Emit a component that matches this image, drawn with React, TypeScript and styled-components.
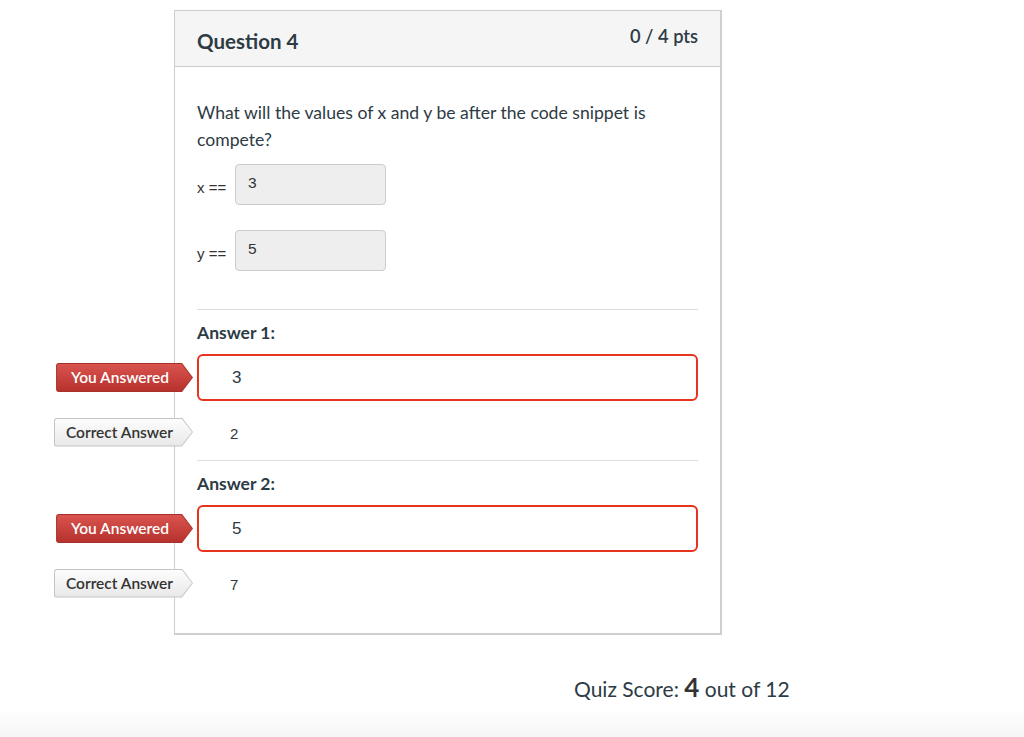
import React from 'react';
import styled, { createGlobalStyle } from 'styled-components';

const GlobalStyle = createGlobalStyle`
  html, body {
    margin: 0;
    padding: 0;
    background: #fff;
  }
  body {
    font-family: Lato, "Open Sans", sans-serif;
    color: #2d3b45;
  }
`;

const Page = styled.div`
  height: 737px;
  display: flex;
  flex-direction: column;
  overflow: hidden;
`;

const Card = styled.div`
  margin: 10px 0 0 174px;
  width: 545px;
  border: 1px solid #c7cdd1;
  border-right: 2px solid #cfcfcf;
  border-bottom: 2px solid #cfcfcf;
  background: #fff;
`;

const Header = styled.div`
  height: 55px;
  background: #f5f5f5;
  border-bottom: 1px solid #c7cdd1;
  display: flex;
  justify-content: space-between;
  padding: 0 22px;
`;

const Title = styled.h2`
  margin: 0;
  font-size: 20.5px;
  font-weight: 700;
  line-height: 60px;
  color: #2d3b45;
`;

const Points = styled.div`
  font-size: 18.3px;
  font-weight: 600;
  line-height: 50px;
  color: #2d3b45;
`;

const Body = styled.div`
  padding: 32px 22px 27px;
`;

const Prompt = styled.p`
  margin: 0;
  font-size: 17.6px;
  line-height: 27px;
  color: #2d3b45;
`;

const VarRow = styled.div<{ $top: number }>`
  display: flex;
  align-items: center;
  margin-top: ${p => p.$top}px;
  font-family: "Liberation Sans", Arial, sans-serif;
  font-size: 15px;
  color: #333;
`;

const VarLabel = styled.span`
  width: 38px;
  padding-top: 5px;
`;

const VarBox = styled.div`
  box-sizing: border-box;
  width: 151px;
  height: 41px;
  background: #eee;
  border: 1px solid #ccc;
  border-radius: 4px;
  padding: 0 12px 3px;
  display: flex;
  align-items: center;
  font-size: 15.5px;
  color: #333;
`;

const Divider = styled.hr<{ $top: number }>`
  margin: ${p => p.$top}px 0 0;
  border: 0;
  border-top: 1px solid #ddd;
`;

const AnswerHeading = styled.h3`
  margin: 11px 0 0;
  font-size: 17.5px;
  font-weight: 700;
  line-height: 24px;
  color: #2d3b45;
`;

const AnswerRow = styled.div<{ $top: number; $height: number }>`
  display: flex;
  align-items: center;
  margin: ${p => p.$top}px 0 0 -144px;
  height: ${p => p.$height}px;
`;

const TagCol = styled.div`
  width: 140px;
  flex-shrink: 0;
  display: flex;
  justify-content: flex-end;
  margin-right: 4px;
`;

const TagEdge = styled.div<{ $variant: 'wrong' | 'correct' }>`
  padding: 1px;
  border-radius: 3px 0 0 3px;
  clip-path: polygon(0 0, calc(100% - 11px) 0, 100% 50%, calc(100% - 11px) 100%, 0 100%);
  background: ${p => (p.$variant === 'wrong' ? '#a8302b' : '#c4c4c4')};
`;

const TagFace = styled.div<{ $variant: 'wrong' | 'correct' }>`
  height: 27px;
  line-height: 27px;
  padding: 0 ${p => (p.$variant === 'wrong' ? '23px 0 14px' : '19px 0 11px')};
  border-radius: 2px 0 0 2px;
  clip-path: polygon(0 0, calc(100% - 10.5px) 0, 100% 50%, calc(100% - 10.5px) 100%, 0 100%);
  font-size: 15.5px;
  font-weight: 600;
  white-space: nowrap;
  color: ${p => (p.$variant === 'wrong' ? '#fff' : '#333')};
  background: ${p =>
    p.$variant === 'wrong'
      ? 'linear-gradient(#d9534f, #b8322d)'
      : 'linear-gradient(#fdfdfd, #e8e8e8)'};
`;

const WrongBox = styled.div`
  box-sizing: border-box;
  flex: 1;
  height: 47px;
  border: 2px solid #e8331f;
  border-radius: 6px;
  display: flex;
  align-items: center;
  padding-left: 33px;
  font-family: "Liberation Sans", Arial, sans-serif;
  font-size: 17px;
  color: #2d3b45;
`;

const CorrectValue = styled.div`
  padding: 3px 0 0 33px;
  font-family: "Liberation Sans", Arial, sans-serif;
  font-size: 15px;
  color: #2d3b45;
`;

const Score = styled.div`
  margin: 37px 0 0 574px;
  font-size: 21px;
  line-height: 30px;
  color: #2d3b45;
  white-space: nowrap;
`;

const ScoreNum = styled.strong`
  font-size: 26px;
  font-weight: 700;
  color: #333;
`;

const Fade = styled.div`
  margin-top: auto;
  height: 28px;
  background: linear-gradient(#fff, #f5f5f5);
`;

type Answer = { label: string; given: string; correct: string };

const answers: Answer[] = [
  { label: 'Answer 1:', given: '3', correct: '2' },
  { label: 'Answer 2:', given: '5', correct: '7' },
];

const Tag: React.FC<{ variant: 'wrong' | 'correct'; children: React.ReactNode }> = ({ variant, children }) => (
  <TagCol>
    <TagEdge $variant={variant}>
      <TagFace $variant={variant}>{children}</TagFace>
    </TagEdge>
  </TagCol>
);

export default function App() {
  return (
    <Page>
      <GlobalStyle />
      <Card>
        <Header>
          <Title>Question 4</Title>
          <Points>0 / 4 pts</Points>
        </Header>
        <Body>
          <Prompt>What will the values of x and y be after the code snippet is compete?</Prompt>
          <VarRow $top={11}>
            <VarLabel>x ==</VarLabel>
            <VarBox>3</VarBox>
          </VarRow>
          <VarRow $top={25}>
            <VarLabel>y ==</VarLabel>
            <VarBox>5</VarBox>
          </VarRow>
          {answers.map((a, i) => (
            <React.Fragment key={a.label}>
              <Divider $top={i === 0 ? 38 : 5} />
              <AnswerHeading>{a.label}</AnswerHeading>
              <AnswerRow $top={9} $height={47}>
                <Tag variant="wrong">You Answered</Tag>
                <WrongBox>{a.given}</WrongBox>
              </AnswerRow>
              <AnswerRow $top={8} $height={46}>
                <Tag variant="correct">Correct Answer</Tag>
                <CorrectValue>{a.correct}</CorrectValue>
              </AnswerRow>
            </React.Fragment>
          ))}
        </Body>
      </Card>
      <Score>
        Quiz Score: <ScoreNum>4</ScoreNum> out of 12
      </Score>
      <Fade />
    </Page>
  );
}
